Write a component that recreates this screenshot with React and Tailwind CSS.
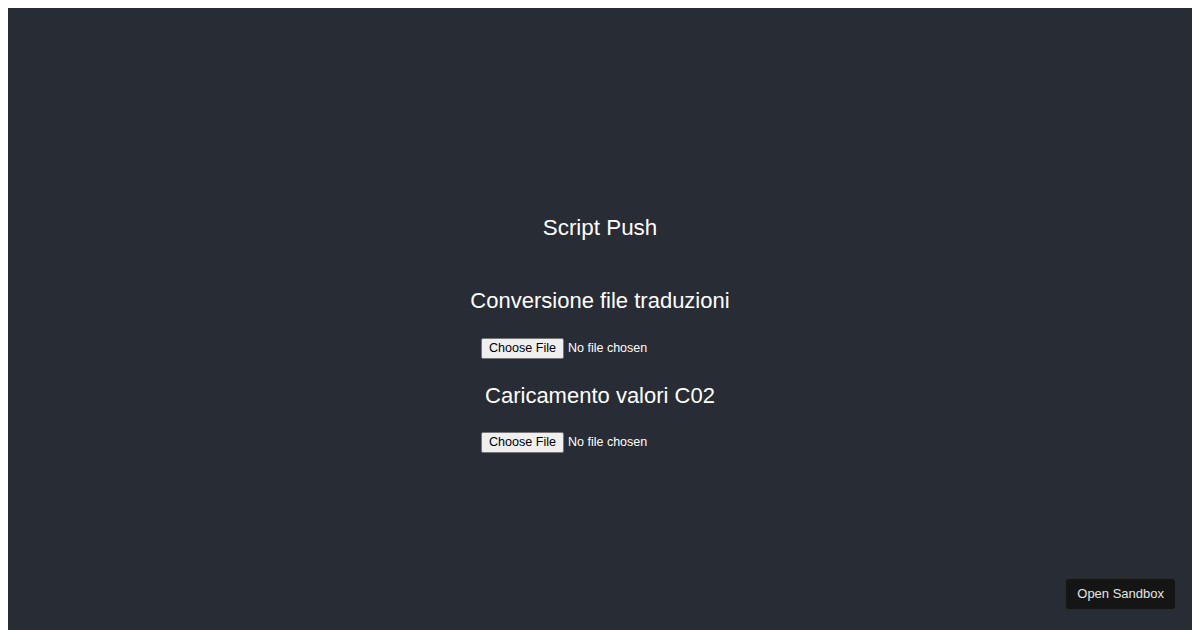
import React from 'react';

const FileRow = () => (
    <div className="w-[238px] flex items-center">
        <span className="w-[83px] h-[21px] flex items-center justify-center bg-[#efefef] border border-[#767676] rounded-[2px] text-black text-[12.6px] leading-none">
            Choose File
        </span>
        <span className="ml-[4px] text-[12.5px] text-white">No file chosen</span>
    </div>
);

const App = () => {
    return (
        <div className="mx-2 mt-2 h-[622px] bg-[#282c34] text-white font-['Liberation_Sans',Arial,sans-serif] flex flex-col items-center pt-[207px]">
            <p className="text-[22.4px] leading-[26px]">Script Push</p>

            <div className="flex flex-col items-center mt-[47px]">
                <p className="text-[22px] leading-[26px]">Conversione file traduzioni</p>
                <div className="mt-[24px]">
                    <FileRow />
                </div>

                <p className="text-[22px] leading-[26px] mt-[24px]">Caricamento valori C02</p>
                <div className="mt-[23px]">
                    <FileRow />
                </div>
            </div>

            <button className="fixed right-[24px] bottom-[20px] h-[32px] px-[11px] rounded bg-[#151515] border border-[#2a2a2a] text-[13px] text-[#e5e5e5]">
                Open Sandbox
            </button>
        </div>
    );
};

export default App;
